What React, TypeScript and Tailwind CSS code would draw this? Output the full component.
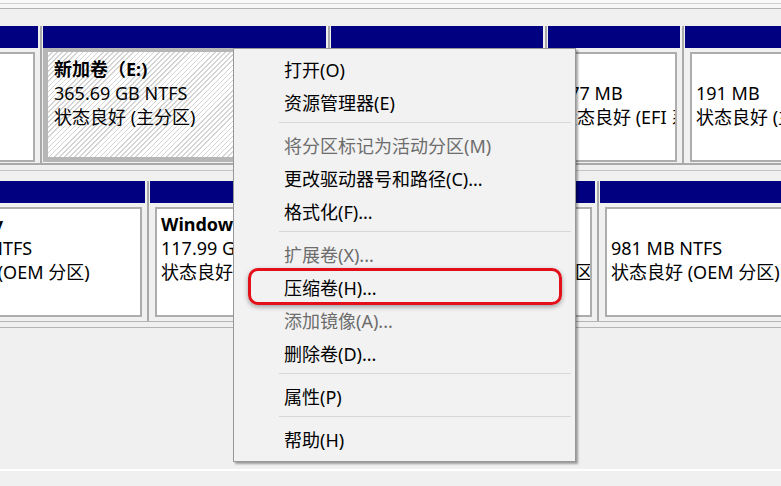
import type { ReactNode } from 'react'

type Part = { name?: string; size?: string; status?: string }

function Box({ part, className = '' }: { part: Part; className?: string }) {
  return (
    <div className={`h-[110px] overflow-hidden whitespace-nowrap border-2 border-[#adadad] bg-white pl-[4px] pt-[3px] leading-[24px] ${className}`}>
      <div className="h-[24px] font-bold">{part.name}</div>
      <div className="h-[24px]">{part.size}</div>
      <div className="h-[24px]">{part.status}</div>
    </div>
  )
}

function Col({ className, children }: { className: string; children: ReactNode }) {
  return (
    <div className={`flex shrink-0 flex-col ${className}`}>
      <div className="h-[22px] bg-[#000080]" />
      {children}
    </div>
  )
}

function Divider() {
  return (
    <div className="flex w-[5px] shrink-0 justify-center">
      <div className="w-[2px] bg-[#a9a9a9]" />
    </div>
  )
}

const menu: ({ label: string; disabled?: boolean } | null)[] = [
  { label: '打开(O)' },
  { label: '资源管理器(E)' },
  null,
  { label: '将分区标记为活动分区(M)', disabled: true },
  { label: '更改驱动器号和路径(C)...' },
  { label: '格式化(F)...' },
  null,
  { label: '扩展卷(X)...', disabled: true },
  { label: '压缩卷(H)...' },
  { label: '添加镜像(A)...', disabled: true },
  { label: '删除卷(D)...' },
  null,
  { label: '属性(P)' },
  null,
  { label: '帮助(H)' },
]

export default function App() {
  return (
    <div className="relative h-[486px] w-[781px] overflow-hidden bg-[#f0f0f0] font-['Noto_Sans','Noto_Sans_CJK_SC',sans-serif] text-[18px] text-black">
      {/* top edge */}
      <div className="h-[3px] bg-[#f9f9f9]" />
      <div className="h-px bg-[#cfcfcf]" />
      <div className="h-[4px] bg-[#f7f7f7]" />
      <div className="h-px bg-[#b4b4b4]" />
      <div className="h-[17px]" />

      {/* disk row 1 */}
      <div className="flex h-[139px] border-b-2 border-[#a9a9a9]">
        <Col className="w-[38px]">
          <div className="pt-[4px] pr-[3px]">
            <Box part={{}} className="border-l-0" />
          </div>
        </Col>
        <Divider />
        <Col className="w-[283px]">
          <div className="h-[114px] whitespace-nowrap border-[5px] border-t-[4px] border-[#b6b6b6] bg-[repeating-linear-gradient(135deg,#ffffff_0px,#ffffff_2.5px,#d4d4d4_2.5px,#d4d4d4_3.6px)] pl-[6px] pt-[5px] leading-[24px]">
            <div className="h-[24px] font-bold">新加卷（E:)</div>
            <div className="h-[24px]">365.69 GB NTFS</div>
            <div className="h-[24px]">状态良好 (主分区)</div>
          </div>
        </Col>
        <Divider />
        <Col className="w-[212px]">
          <div className="pt-[4px] pl-[5px] pr-[3px]">
            <Box part={{}} />
          </div>
        </Col>
        <Divider />
        <Col className="w-[132px]">
          <div className="pt-[4px] pl-[5px] pr-[3px]">
            <Box part={{ size: '977 MB', status: '状态良好 (EFI 系统分区)' }} />
          </div>
        </Col>
        <Divider />
        <Col className="w-[200px]">
          <div className="pt-[4px] pl-[5px] pr-[3px]">
            <Box part={{ size: '191 MB', status: '状态良好 (主分区)' }} />
          </div>
        </Col>
      </div>

      <div className="h-[5px]" />
      <div className="h-px bg-[#c4c4c4]" />
      <div className="h-[10px]" />

      {/* disk row 2 */}
      <div className="flex h-[140px]">
        <Col className="-ml-[90px] w-[235px]">
          <div className="pt-[4px] pl-[5px] pr-[3px]">
            <Box part={{ name: 'Recovery', size: '990 MB NTFS', status: '状态良好 (OEM 分区)' }} />
          </div>
        </Col>
        <Divider />
        <Col className="w-[273px]">
          <div className="pt-[4px] pl-[5px] pr-[3px]">
            <Box part={{ name: 'Windows', size: '117.99 GB', status: '状态良好' }} />
          </div>
        </Col>
        <Divider />
        <Col className="w-[167px]">
          <div className="pt-[4px] pl-[5px] pr-[3px]">
            <Box part={{ status: '状态良好 (恢复分区)' }} />
          </div>
        </Col>
        <Divider />
        <Col className="w-[220px]">
          <div className="pt-[4px] pl-[5px] pr-[3px]">
            <Box part={{ size: '981 MB NTFS', status: '状态良好 (OEM 分区)' }} />
          </div>
        </Col>
      </div>

      <div className="h-px bg-[#b4b4b4]" />
      <div className="h-[5px]" />
      <div className="h-px bg-[#b4b4b4]" />
      <div className="h-[141px]" />
      <div className="h-[2px] bg-white" />

      {/* context menu */}
      <div className="absolute left-[233px] top-[48px] w-[343px] border border-[#979797] bg-[#f2f2f2] pt-[5px] pb-[4px] shadow-[2px_2px_2px_rgba(0,0,0,0.35)]">
        {menu.map((item, i) =>
          item ? (
            <div
              key={i}
              className={`flex h-[33px] items-center whitespace-nowrap pl-[50px] ${item.disabled ? 'text-[#6d6d6d]' : 'text-black'}`}
            >
              {item.label}
            </div>
          ) : (
            <div key={i} className="h-[10px] pt-[2px] pl-[45px] pr-[4px]">
              <div className="h-px bg-[#d7d7d7]" />
            </div>
          ),
        )}
      </div>

      {/* red highlight */}
      <div className="absolute left-[248px] top-[268px] h-[37px] w-[314px] rounded-[10px] border-[3px] border-[#e3101a] shadow-[0_2px_5px_rgba(0,0,0,0.35)]" />
    </div>
  )
}
